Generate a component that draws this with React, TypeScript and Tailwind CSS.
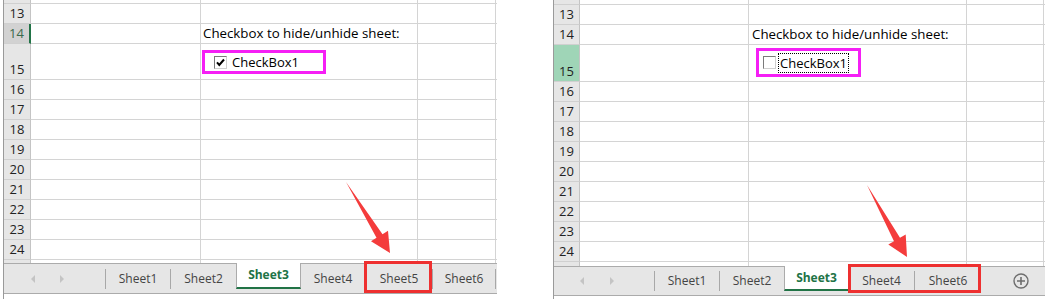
import React from "react";

const FONT = "font-['Open_Sans',sans-serif]";

type RowProps = {
  hCls: string;
  headerW: string;
  cols: string[];
  label?: string;
  tone?: string;
  b?: React.ReactNode;
  bPad?: string;
};

function GridRow({ hCls, headerW, cols, label, tone, b, bPad }: RowProps) {
  return (
    <div className={`flex shrink-0 ${hCls}`}>
      <div
        className={`${headerW} shrink-0 border-b border-b-[#d0d0d0] border-r ${
          tone ?? "bg-[#e6e6e6] text-[#222] border-r-[#c4c4c4]"
        } flex items-end justify-center text-[13px] leading-[19px]`}
      >
        {label}
      </div>
      {cols.map((c, i) => (
        <div
          key={i}
          className={`${c} shrink-0 border-r border-b border-[#d4d4d4] flex items-end ${
            i === 1 ? bPad ?? "" : ""
          }`}
        >
          {i === 1 ? b : null}
        </div>
      ))}
      <div className="flex-1 border-b border-[#d4d4d4]" />
    </div>
  );
}

function Sep() {
  return <div className="w-px h-[20px] self-center bg-[#a8a8a8] shrink-0" />;
}

function Tab({ w, label }: { w: string; label: string }) {
  return (
    <div className={`${w} shrink-0 flex items-center justify-center text-[12px] text-[#444]`}>
      {label}
    </div>
  );
}

function ActiveTab({ w }: { w: string }) {
  return (
    <div
      className={`${w} shrink-0 -mt-px mb-[4px] bg-white border-x border-x-[#ababab] border-b-2 border-b-[#217346] flex items-center justify-center text-[12px] font-bold text-[#217346]`}
    >
      Sheet3
    </div>
  );
}

function Nav({ w, gap }: { w: string; gap: string }) {
  return (
    <div className={`${w} shrink-0 flex items-center`}>
      <div className={`flex items-center ${gap}`}>
        <div className="w-0 h-0 border-y-[4px] border-y-transparent border-r-[4px] border-r-[#c4c4c4]" />
        <div className="w-0 h-0 border-y-[4px] border-y-transparent border-l-[4px] border-l-[#c4c4c4]" />
      </div>
    </div>
  );
}

function Box({ checked }: { checked: boolean }) {
  return (
    <div className="w-[13px] h-[13px] shrink-0 border border-t-[#7a7a7a] border-l-[#7a7a7a] border-r-[#d0d0d0] border-b-[#d0d0d0] bg-white flex items-center justify-center">
      {checked && (
        <svg width="11" height="11" viewBox="0 0 11 11">
          <path d="M2 5.3 L4.3 8 L9 2.5" fill="none" stroke="#000" strokeWidth="2" />
        </svg>
      )}
    </div>
  );
}

function LeftPanel() {
  const cols = ["w-[170px]", "w-[217px]", "w-[78px]"];
  const hw = "w-[27px]";
  const nums = [16, 17, 18, 19, 20, 21, 22, 23, 24];
  return (
    <div className="relative w-[497px] shrink-0 h-full pl-[3px]">
      <div className="h-full border-l border-l-[#9a9a9a] flex flex-col">
        <GridRow hCls="h-[4px]" headerW={hw} cols={cols} />
        <GridRow hCls="h-[20px]" headerW={hw} cols={cols} label="13" />
        <GridRow
          hCls="h-[20px]"
          headerW={hw}
          cols={cols}
          label="14"
          tone="bg-[#d2d2d2] text-[#3a6a4c] border-r-2 border-r-[#217346]"
          bPad="pl-[2px]"
          b={<span className="text-[13.3px] leading-[19px] text-black whitespace-nowrap">Checkbox to hide/unhide sheet:</span>}
        />
        <GridRow hCls="h-[36px]" headerW={hw} cols={cols} label="15" />
        {nums.map((n) => (
          <GridRow key={n} hCls="h-[20px]" headerW={hw} cols={cols} label={String(n)} />
        ))}
        <div className="flex h-[3px] shrink-0">
          <div className="w-[27px] bg-[#e6e6e6] border-r border-r-[#c4c4c4]" />
          <div className="w-[170px] border-r border-[#d4d4d4]" />
          <div className="w-[217px] border-r border-[#d4d4d4]" />
          <div className="w-[78px] border-r border-[#d4d4d4]" />
        </div>
        <div className="h-[31px] shrink-0 flex bg-[#e6e6e6] border-y border-y-[#ababab]">
          <Nav w="w-[101px]" gap="gap-[25px] pl-[27px]" />
          <Sep />
          <Tab w="w-[64px]" label="Sheet1" />
          <Sep />
          <Tab w="w-[65px]" label="Sheet2" />
          <ActiveTab w="w-[65px]" />
          <Tab w="w-[64px]" label="Sheet4" />
          <Sep />
          <Tab w="w-[66px]" label="Sheet5" />
          <Sep />
          <Tab w="w-[62px]" label="Sheet6" />
          <Sep />
        </div>
        <div className="flex-1 bg-white" />
      </div>
      <div className="absolute left-[202px] top-[50px] w-[124px] h-[24px] border-[3px] border-[#f51ff5] flex items-center pl-[9px]">
        <Box checked />
        <span className="ml-[5px] text-[13px] leading-[16px] text-black">CheckBox1</span>
      </div>
      <div className="absolute left-[364px] top-[261px] w-[68px] h-[32px] border-[3px] border-[#ee3030]" />
    </div>
  );
}

function RightPanel() {
  const cols = ["w-[169px]", "w-[218px]", "w-[77px]"];
  const hw = "w-[26px]";
  const nums = [16, 17, 18, 19, 20, 21, 22, 23, 24];
  return (
    <div className="relative w-[493px] shrink-0 h-full pl-[1px]">
      <div className="h-full border-l border-l-[#9a9a9a] flex flex-col">
        <GridRow hCls="h-[5px]" headerW={hw} cols={cols} />
        <GridRow hCls="h-[20px]" headerW={hw} cols={cols} label="13" />
        <GridRow
          hCls="h-[20px]"
          headerW={hw}
          cols={cols}
          label="14"
          bPad="pl-[3px]"
          b={<span className="text-[13.3px] leading-[19px] text-black whitespace-nowrap">Checkbox to hide/unhide sheet:</span>}
        />
        <GridRow
          hCls="h-[37px]"
          headerW={hw}
          cols={cols}
          label="15"
          tone="bg-[#9fd5b7] text-[#1e1e1e] border-r-[#c4c4c4]"
        />
        {nums.map((n) => (
          <GridRow key={n} hCls="h-[20px]" headerW={hw} cols={cols} label={String(n)} />
        ))}
        <div className="flex h-[4px] shrink-0">
          <div className="w-[26px] bg-[#e6e6e6] border-r border-r-[#c4c4c4]" />
          <div className="w-[169px] border-r border-[#d4d4d4]" />
          <div className="w-[218px] border-r border-[#d4d4d4]" />
          <div className="w-[77px] border-r border-[#d4d4d4]" />
        </div>
        <div className="h-[30px] shrink-0 flex bg-[#e6e6e6] border-y border-y-[#ababab]">
          <Nav w="w-[100px]" gap="gap-[26px] pl-[26px]" />
          <Sep />
          <Tab w="w-[64px]" label="Sheet1" />
          <Sep />
          <Tab w="w-[64px]" label="Sheet2" />
          <ActiveTab w="w-[65px]" />
          <Tab w="w-[65px]" label="Sheet4" />
          <Sep />
          <Tab w="w-[66px]" label="Sheet6" />
          <div className="flex-1 flex items-center pl-[32px]">
            <svg width="16" height="16" viewBox="0 0 16 16">
              <circle cx="8" cy="8" r="7" fill="none" stroke="#6e6e6e" strokeWidth="1.4" />
              <path d="M8 4 V12 M4 8 H12" stroke="#6e6e6e" strokeWidth="1.6" />
            </svg>
          </div>
        </div>
        <div className="flex-1 bg-white" />
      </div>
      <div className="absolute left-[204px] top-[48px] w-[105px] h-[29px] border-[3px] border-[#f51ff5] flex items-center pl-[4px]">
        <Box checked={false} />
        <div className="ml-[2px] h-[20px] px-[1px] border border-dotted border-black flex items-center">
          <span className="text-[13px] leading-[16px] text-black">CheckBox1</span>
        </div>
      </div>
      <div className="absolute left-[296px] top-[264px] w-[133px] h-[29px] border-[3px] border-[#ee3030]" />
    </div>
  );
}

export default function App() {
  return (
    <div className={`relative w-[1045px] h-[299px] bg-white flex overflow-hidden ${FONT}`}>
      <LeftPanel />
      <div className="w-[55px] shrink-0" />
      <RightPanel />
      <svg className="absolute left-0 top-0 pointer-events-none" width="1045" height="299" viewBox="0 0 1045 299">
        <polygon points="346,182 382.5,234.2 388,230.7 390,253 371,241.3 376.5,237.8" fill="#f43c3c" />
        <polygon points="867,185 900,237.8 905.7,234.6 907,257 888.3,244.4 894,241.2" fill="#f43c3c" />
      </svg>
    </div>
  );
}
